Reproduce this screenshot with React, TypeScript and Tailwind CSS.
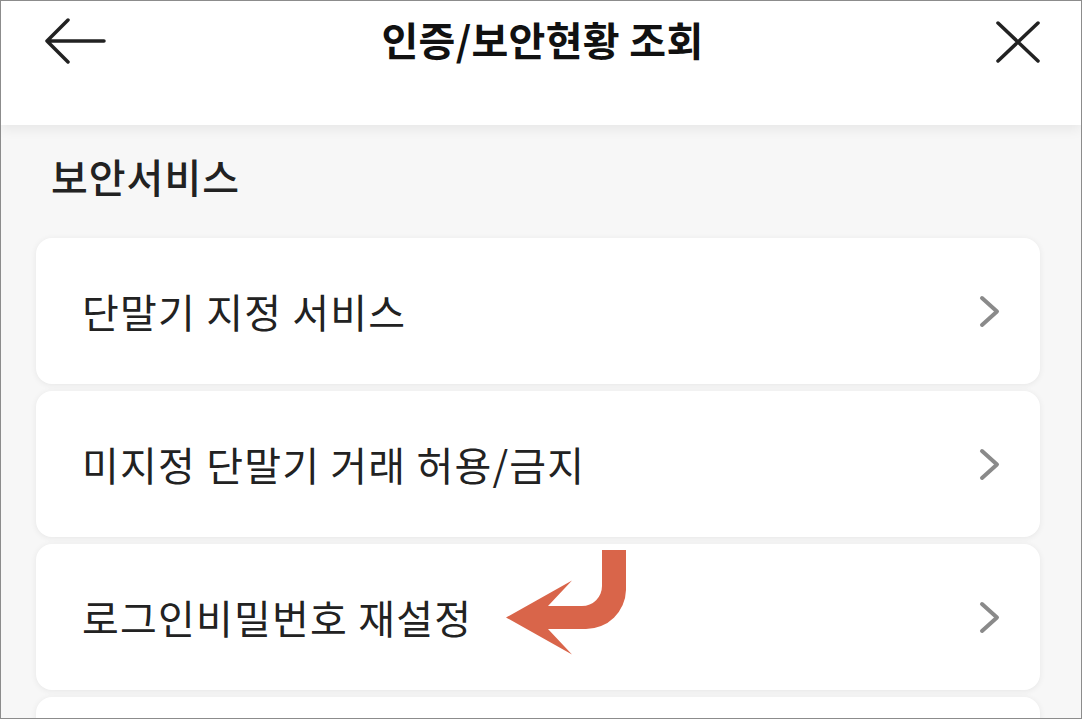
import React from 'react'

const items = ["단말기 지정 서비스", "미지정 단말기 거래 허용/금지", "로그인비밀번호 재설정", ""]

const Chevron = () => (
  <svg width="22" height="33" viewBox="0 0 22 33" className="shrink-0">
    <path d="M3 3 L18 16.5 L3 30" fill="none" stroke="#8a8a8a" strokeWidth="4" strokeLinecap="round" strokeLinejoin="round" />
  </svg>
)

const CurvedArrow = () => (
  <svg width="120" height="105" viewBox="0 0 120 105" className="absolute left-[470px] top-[6px]">
    <path
      d="M96 0 L120 0 L120 40 A40 40 0 0 1 80 79 L42 79 L66 104.5 L0 67.5 L66 30.5 L42 56 L76 56 A20 20 0 0 0 96 36 Z"
      fill="#d9654a"
    />
  </svg>
)

const App = () => {
  return (
    <div className="w-[1082px] h-[719px] overflow-hidden border border-[#8c8c8c] bg-[#f7f7f7] font-['Noto_Sans_CJK_KR','Noto_Sans',sans-serif] text-[#222]">
      <header className="relative z-10 h-[124px] bg-white shadow-[0_4px_12px_rgba(0,0,0,0.07)]">
        <div className="grid h-[82px] grid-cols-[1fr_auto_1fr] items-center pl-[44px] pr-[41px]">
          <svg width="62" height="48" viewBox="0 0 62 48">
            <path d="M2 23 L59 23 M2 23 L23 2 M2 23 L23 44" fill="none" stroke="#222" strokeWidth="3.5" strokeLinecap="round" strokeLinejoin="round" />
          </svg>
          <h1 className="pb-[6px] text-[40px] font-bold tracking-[0.3px] leading-none text-[#111]">인증/보안현황 조회</h1>
          <svg width="44" height="42" viewBox="0 0 44 42" className="justify-self-end">
            <path d="M2 2 L42 40 M42 2 L2 40" fill="none" stroke="#222" strokeWidth="3.5" strokeLinecap="round" />
          </svg>
        </div>
      </header>

      <h2 className="mt-[25px] ml-[50px] text-[40px] font-medium tracking-[1px] leading-[52px]">보안서비스</h2>

      <div className="mt-[36px] ml-[35px] w-[1004px] flex flex-col gap-[7px]">
        {items.map((label, index) => (
          <div key={index} className="relative flex h-[146px] shrink-0 items-center justify-between rounded-[16px] bg-white pl-[46px] pr-[39px] shadow-[0_1px_6px_rgba(0,0,0,0.07)]">
            <span className="text-[40px] tracking-[1.2px] leading-none">{label}</span>
            {label && <Chevron />}
            {index === 2 && <CurvedArrow />}
          </div>
        ))}
      </div>
    </div>
  )
}

export default App
